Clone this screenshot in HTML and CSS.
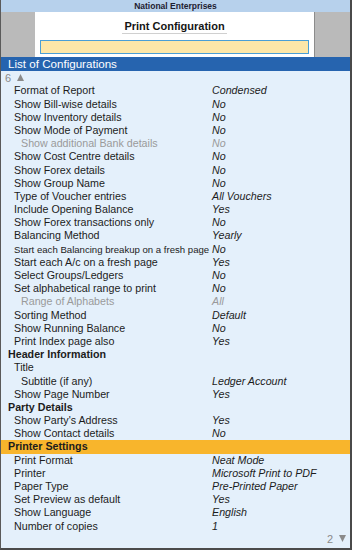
FILE: index.html
```html
<!DOCTYPE html>
<html>
<head>
<meta charset="utf-8">
<link rel="stylesheet" href="styles.css">
</head>
<body>
<div class="window">
  <div class="titlebar">National Enterprises</div>
  <div class="top">
    <div class="panel">
      <div class="ptitle"><span>Print Configuration</span></div>
      <div class="input"></div>
    </div>
  </div>
  <div class="listhead">List of Configurations</div>
  <div class="list">
    <div class="more up">6 <svg width="7" height="7" viewBox="0 0 7 7"><polygon points="3.5,0 7,7 0,7" fill="#8a8a8a"/></svg></div>
    <div class="rows">
      <div class="row"><span class="lbl">Format of Report</span><span class="val">Condensed</span></div>
      <div class="row"><span class="lbl">Show Bill-wise details</span><span class="val">No</span></div>
      <div class="row"><span class="lbl">Show Inventory details</span><span class="val">No</span></div>
      <div class="row"><span class="lbl">Show Mode of Payment</span><span class="val">No</span></div>
      <div class="row dim sub"><span class="lbl">Show additional Bank details</span><span class="val">No</span></div>
      <div class="row"><span class="lbl">Show Cost Centre details</span><span class="val">No</span></div>
      <div class="row"><span class="lbl">Show Forex details</span><span class="val">No</span></div>
      <div class="row"><span class="lbl">Show Group Name</span><span class="val">No</span></div>
      <div class="row"><span class="lbl">Type of Voucher entries</span><span class="val">All Vouchers</span></div>
      <div class="row"><span class="lbl">Include Opening Balance</span><span class="val">Yes</span></div>
      <div class="row"><span class="lbl">Show Forex transactions only</span><span class="val">No</span></div>
      <div class="row"><span class="lbl">Balancing Method</span><span class="val">Yearly</span></div>
      <div class="row"><span class="lbl narrow">Start each Balancing breakup on a fresh page</span><span class="val">No</span></div>
      <div class="row"><span class="lbl">Start each A/c on a fresh page</span><span class="val">Yes</span></div>
      <div class="row"><span class="lbl">Select Groups/Ledgers</span><span class="val">No</span></div>
      <div class="row"><span class="lbl">Set alphabetical range to print</span><span class="val">No</span></div>
      <div class="row dim sub"><span class="lbl">Range of Alphabets</span><span class="val">All</span></div>
      <div class="row"><span class="lbl">Sorting Method</span><span class="val">Default</span></div>
      <div class="row"><span class="lbl">Show Running Balance</span><span class="val">No</span></div>
      <div class="row"><span class="lbl">Print Index page also</span><span class="val">Yes</span></div>
      <div class="row head"><span class="lbl">Header Information</span></div>
      <div class="row"><span class="lbl">Title</span></div>
      <div class="row sub"><span class="lbl">Subtitle (if any)</span><span class="val">Ledger Account</span></div>
      <div class="row"><span class="lbl">Show Page Number</span><span class="val">Yes</span></div>
      <div class="row head"><span class="lbl">Party Details</span></div>
      <div class="row"><span class="lbl">Show Party's Address</span><span class="val">Yes</span></div>
      <div class="row"><span class="lbl">Show Contact details</span><span class="val">No</span></div>
      <div class="row head sel"><span class="lbl">Printer Settings</span></div>
      <div class="row"><span class="lbl">Print Format</span><span class="val">Neat Mode</span></div>
      <div class="row"><span class="lbl">Printer</span><span class="val">Microsoft Print to PDF</span></div>
      <div class="row"><span class="lbl">Paper Type</span><span class="val">Pre-Printed Paper</span></div>
      <div class="row"><span class="lbl">Set Preview as default</span><span class="val">Yes</span></div>
      <div class="row"><span class="lbl">Show Language</span><span class="val">English</span></div>
      <div class="row"><span class="lbl">Number of copies</span><span class="val">1</span></div>
    </div>
    <div class="more down">2 <svg width="7" height="7" viewBox="0 0 7 7"><polygon points="0,0 7,0 3.5,7" fill="#8a8a8a"/></svg></div>
  </div>
</div>
</body>
</html>
```

FILE: styles.css
```css
html, body {
  margin: 0;
  padding: 0;
  background: #e4f0fb;
}
body {
  font-family: "Liberation Sans", Arial, sans-serif;
  color: #1c1c1c;
}
.window {
  width: 352px;
  height: 550px;
  box-sizing: border-box;
  border-left: 1px solid #5a5a5a;
  border-right: 2px solid #4a4a4a;
  border-bottom: 2px solid #4a4a4a;
  display: flex;
  flex-direction: column;
  background: #e4f0fb;
  overflow: hidden;
}
.titlebar {
  height: 12px;
  line-height: 12px;
  background: #b7d1ec;
  text-align: center;
  font-weight: bold;
  font-size: 8.5px;
  color: #1e2030;
}
.top {
  height: 45px;
  background: #bababa;
  display: flex;
  justify-content: center;
}
.panel {
  width: 280px;
  margin-left: -1px;
  background: #ffffff;
  border-right: 1px solid #8c8c8c;
  box-sizing: border-box;
  padding: 4px 5px 0 5px;
  display: flex;
  flex-direction: column;
}
.ptitle {
  text-align: center;
  height: 24px;
}
.ptitle span {
  display: inline-block;
  font-weight: bold;
  font-size: 11px;
  line-height: 14px;
  padding: 0 2px;
  border-bottom: 1px solid #d0d0d0;
  color: #151515;
}
.input {
  height: 14px;
  box-sizing: border-box;
  background: #fde7a8;
  border: 1px solid #4a9fd6;
}
.listhead {
  height: 14px;
  line-height: 14px;
  background: #2664af;
  color: #ffffff;
  font-size: 11.6px;
  padding-left: 7px;
}
.list {
  flex: 1;
  display: flex;
  flex-direction: column;
}
.more {
  color: #8a8a8a;
  font-size: 11px;
  display: flex;
  align-items: center;
  gap: 6px;
}
.more.up {
  height: 13.4px;
  padding-left: 4px;
}
.more.down {
  justify-content: flex-end;
  padding-right: 4px;
  height: 12px;
}
.rows {
  display: flex;
  flex-direction: column;
}
.row {
  display: grid;
  grid-template-columns: 211px 1fr;
  height: 13.2px;
  line-height: 13.2px;
  font-size: 10.7px;
  white-space: nowrap;
}
.lbl {
  padding-left: 13px;
}
.sub .lbl {
  padding-left: 20px;
}
.head .lbl {
  padding-left: 7px;
  font-weight: bold;
}
.narrow {
  font-size: 9.6px;
}
.val {
  font-style: italic;
}
.dim {
  color: #9a9a9a;
}
.sel {
  background: #f8b52c;
}
```
